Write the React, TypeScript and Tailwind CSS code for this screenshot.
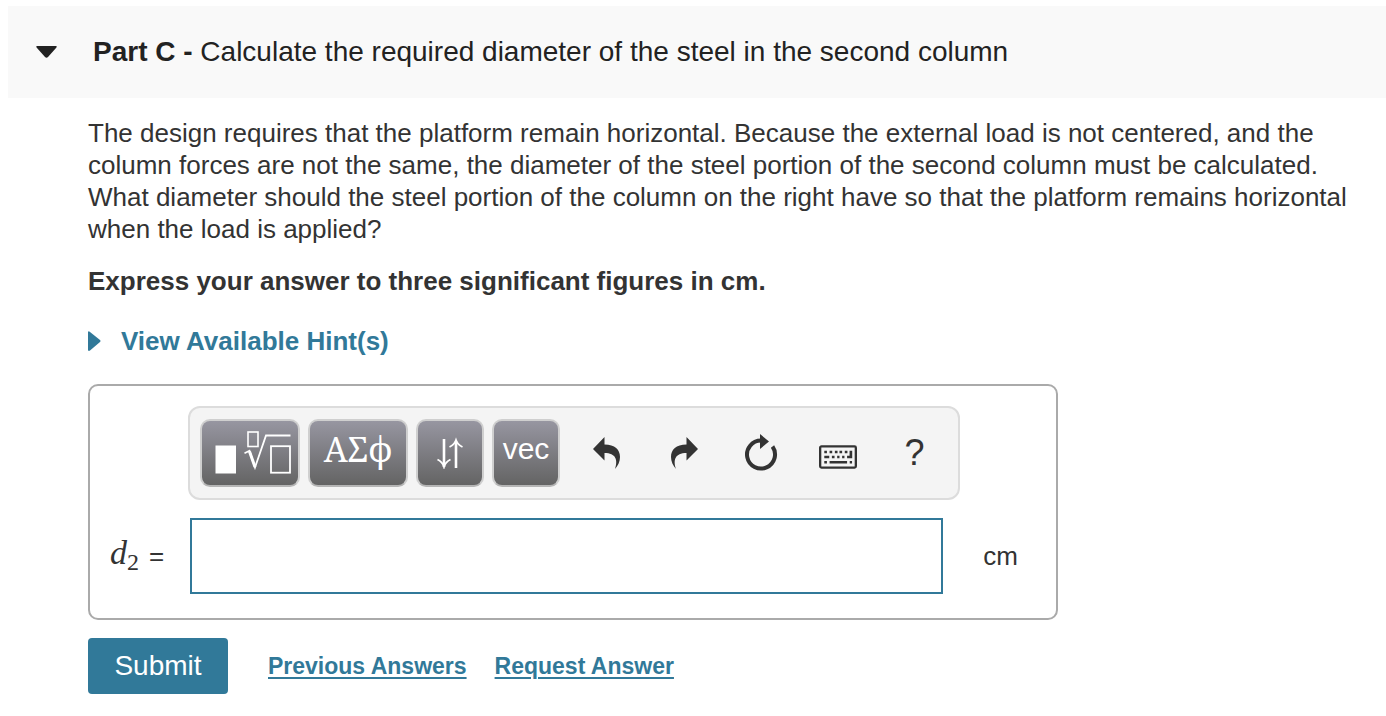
import type { ReactNode } from 'react';

const textButton =
  'h-[68px] shrink-0 rounded-[10px] border-2 border-[#cfcfcf] border-b-[#b5b5b5] bg-linear-to-b from-[#9796a1] to-[#646464] text-white flex items-center justify-center';

function IconButton({ label, children }: { label: string; children: ReactNode }) {
  return (
    <button type="button" aria-label={label} className="flex h-[68px] w-[69px] items-center justify-center text-[#333]">
      {children}
    </button>
  );
}

function TemplatesIcon() {
  return (
    <svg width="96" height="64" viewBox="0 0 96 64" fill="none" stroke="#fff" className="shrink-0">
      <rect x="13.5" y="24.5" width="20.5" height="28" fill="#fff" stroke="none" />
      <rect x="46" y="11" width="10" height="14.5" strokeWidth="1.6" />
      <rect x="69" y="25.2" width="19" height="26.5" strokeWidth="1.8" />
      <path d="M42.5 32.2L47.5 29.8L53 46.5L64 14.5H88.5" strokeWidth="1.8" />
      <path d="M47.5 30.5L53 46" strokeWidth="3" />
    </svg>
  );
}

function ArrowsIcon() {
  return (
    <svg width="28" height="32" viewBox="0 0 28 32" fill="none" stroke="#fff">
      <path d="M8 2V30M20 31V4" strokeWidth="2.6" />
      <path d="M1.5 22.5C4.5 24 7 26.5 8 30C9 26.5 11.5 24 14.5 22.5M13.5 10C16.5 8.5 19 6 20 3C21 6 23.5 8.5 26.5 10" strokeWidth="1.8" />
    </svg>
  );
}

function UndoIcon() {
  return (
    <svg width="28" height="32" viewBox="0 0 28 32" fill="currentColor">
      <path d="M0 12L11.5 0V7.5C22 7.5 27 12.5 27 20C27 24.5 25 28.5 22 32C25 23 23 16 11.5 16V23.5Z" />
    </svg>
  );
}

function RedoIcon() {
  return (
    <svg width="28" height="32" viewBox="0 0 28 32" fill="currentColor">
      <path d="M28 12L16.5 0V7.5C6 7.5 1 12.5 1 20C1 24.5 3 28.5 6 32C3 23 5 16 16.5 16V23.5Z" />
    </svg>
  );
}

function ResetIcon() {
  return (
    <svg width="34" height="38" viewBox="0 0 34 38" fill="none">
      <path d="M17 6.5A14 14 0 1 0 28.5 12.5" stroke="currentColor" strokeWidth="4" />
      <path d="M16 0L25 7.5L16 15Z" fill="currentColor" />
    </svg>
  );
}

function KeyboardIcon() {
  return (
    <svg width="38" height="24" viewBox="0 0 115 72" fill="none" stroke="currentColor" strokeWidth="8" className="mt-2">
      <rect x="3.5" y="4" width="108" height="64" rx="4" strokeWidth="7" />
      <path d="M16 21H24M32 21H40M48 21H56M62 21H70M78 21H86" />
      <path d="M16 36H31M39 36H47M55 36H62M70 36H77M85 36H100M96.5 17V40" />
      <path d="M16 52H24M32 52H85M93 52H100" />
    </svg>
  );
}

export default function App() {
  return (
    <main className="bg-white pt-1.5 pl-2 font-['Liberation_Sans',Arial,sans-serif] text-[26px] leading-8 text-[#333]">
      <header className="flex h-[92px] items-center bg-[#f9f9f9] pl-7 text-[#222]">
        <button type="button" aria-label="Collapse Part C" className="mr-9">
          <svg width="21" height="12" viewBox="0 0 21 12" fill="currentColor">
            <path d="M1 0H20Q21.5 0.5 20 2L12 11Q10.5 12.5 9 11L1 2Q-0.5 0.5 1 0Z" />
          </svg>
        </button>
        <h1 className="text-[28px]">
          <strong>Part C -</strong> Calculate the required diameter of the steel in the second column
        </h1>
      </header>

      <div className="pt-[19px] pr-8 pl-20">
        <p>
          The design requires that the platform remain horizontal. Because the external load is not centered, and the
          column forces are not the same, the diameter of the steel portion of the second column must be calculated.
          What diameter should the steel portion of the column on the right have so that the platform remains horizontal
          when the load is applied?
        </p>
        <p className="mt-5 font-bold">Express your answer to three significant figures in cm.</p>
        <button type="button" className="mt-7 flex items-center gap-5 font-bold text-[#317999]">
          <svg width="13" height="20" viewBox="0 0 13 20" fill="currentColor">
            <path d="M0 1Q0.5 -0.5 2 1L12 9Q13 10 12 11L2 19.5Q0.5 20.5 0 19Z" />
          </svg>
          View Available Hint(s)
        </button>

        <form>
          <div className="mt-[27px] max-w-[970px] rounded-[10px] border-2 border-[#aaa] pt-5 pr-[38px] pb-6 pl-5">
            <div className="mr-[58px] ml-[78px] flex h-[94px] items-center gap-2 rounded-xl border-2 border-[#dcdcdc] bg-[#f4f4f4] px-2.5">
              <button type="button" aria-label="Templates" className={`${textButton} w-[100px]`}>
                <TemplatesIcon />
              </button>
              <button type="button" className={`${textButton} w-[100px] pb-2 font-['Noto_Serif','Liberation_Serif',serif] text-[34px]`}>
                ΑΣϕ
              </button>
              <button type="button" aria-label="Arrows" className={`${textButton} w-[68px]`}>
                <ArrowsIcon />
              </button>
              <button type="button" className={`${textButton} w-[68px] pb-2 text-[30px]`}>
                vec
              </button>
              <div className="ml-1 flex gap-2">
                <IconButton label="Undo">
                  <UndoIcon />
                </IconButton>
                <IconButton label="Redo">
                  <RedoIcon />
                </IconButton>
                <IconButton label="Reset">
                  <ResetIcon />
                </IconButton>
                <IconButton label="Keyboard">
                  <KeyboardIcon />
                </IconButton>
                <IconButton label="Help">
                  <span className="text-[36px]">?</span>
                </IconButton>
              </div>
            </div>
            <div className="mt-[18px] flex items-center">
              <label htmlFor="answer" className="flex w-20 shrink-0 items-center gap-2.5">
                <span className="pb-1.5 font-['Liberation_Serif',serif] text-[34px]">
                  <i>d</i>
                  <sub className="text-[24px]">2</sub>
                </span>
                =
              </label>
              <input id="answer" type="text" className="h-[76px] min-w-0 flex-1 border-2 border-[#317999] px-3" />
              <span className="ml-10">cm</span>
            </div>
          </div>

          <div className="mt-[18px] flex items-center text-[23px] font-bold text-[#317999]">
            <button type="submit" className="h-14 w-[140px] rounded-sm bg-[#317999] text-[28px] font-normal text-white">
              Submit
            </button>
            <a href="#previous" className="ml-10 underline decoration-2 underline-offset-3">
              Previous Answers
            </a>
            <a href="#request" className="ml-7 underline decoration-2 underline-offset-3">
              Request Answer
            </a>
          </div>
        </form>
      </div>
    </main>
  );
}
